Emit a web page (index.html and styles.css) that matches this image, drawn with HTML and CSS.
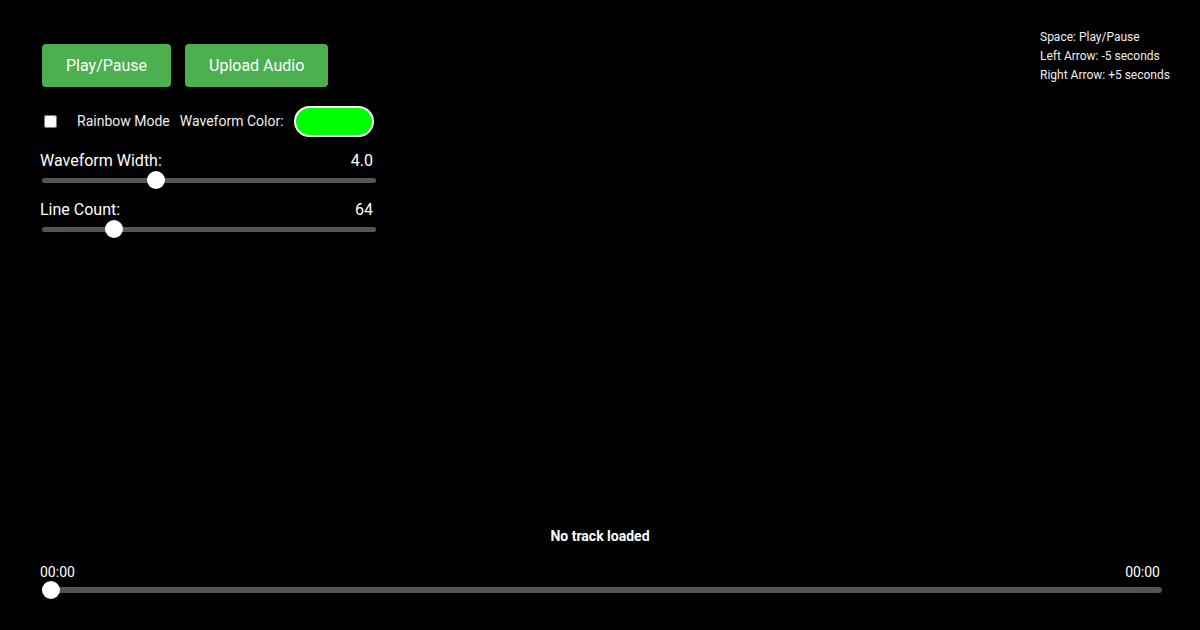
FILE: index.html
```html
<!DOCTYPE html>
<html>
<head>
<meta charset="utf-8">
<link rel="stylesheet" href="styles.css">
</head>
<body>
<div class="top">
  <div class="panel">
    <div class="buttons">
      <button class="btn">Play/Pause</button>
      <button class="btn">Upload Audio</button>
    </div>
    <div class="options">
      <input type="checkbox" class="check">
      <span class="opt-label rainbow">Rainbow Mode</span>
      <span class="opt-label">Waveform Color:</span>
      <span class="swatch"></span>
    </div>
    <div class="slider-group">
      <div class="slider-label"><span>Waveform Width:</span><span>4.0</span></div>
      <input type="range" class="range" min="1" max="10" step="0.1" value="4">
    </div>
    <div class="slider-group second">
      <div class="slider-label"><span>Line Count:</span><span>64</span></div>
      <input type="range" class="range" min="16" max="256" value="64">
    </div>
  </div>
  <div class="help">
    <div>Space: Play/Pause</div>
    <div>Left Arrow: -5 seconds</div>
    <div>Right Arrow: +5 seconds</div>
  </div>
</div>
<div class="bottom">
  <div class="track-title">No track loaded</div>
  <div class="times"><span>00:00</span><span>00:00</span></div>
  <input type="range" class="range progress" min="0" max="100" value="0">
</div>
</body>
</html>
```

FILE: styles.css
```css
* { box-sizing: border-box; }
html, body { margin: 0; padding: 0; }
body {
  width: 1200px;
  height: 630px;
  background: #000;
  color: #fff;
  font-family: Roboto, "Liberation Sans", sans-serif;
  display: flex;
  flex-direction: column;
  overflow: hidden;
}
.top {
  display: flex;
  justify-content: space-between;
  align-items: flex-start;
}
.panel {
  width: 338px;
  margin-left: 40px;
  padding-top: 44px;
}
.buttons {
  display: flex;
  gap: 14px;
  padding-left: 2px;
}
.btn {
  height: 43px;
  padding: 0 24px;
  background: #4caf50;
  color: #fff;
  border: none;
  border-radius: 4px;
  font-family: Roboto, "Liberation Sans", sans-serif;
  font-size: 16px;
}
.options {
  display: flex;
  align-items: center;
  height: 30px;
  margin-top: 19px;
}
.check {
  width: 13px;
  height: 13px;
  margin: 0 20px 0 4px;
}
.opt-label {
  font-size: 14px;
  color: #eee;
}
.rainbow { margin-right: 10px; }
.swatch {
  display: block;
  width: 80px;
  height: 31px;
  margin-left: 10px;
  background: #00ff00;
  border: 2px solid #fff;
  border-radius: 16px;
}
.slider-group { margin-top: 15px; }
.slider-group.second { margin-top: 11px; }
.slider-label {
  display: flex;
  justify-content: space-between;
  font-size: 16px;
  line-height: 19px;
  padding-right: 5px;
  margin-bottom: 1px;
}
.range {
  -webkit-appearance: none;
  appearance: none;
  display: block;
  width: calc(100% - 4px);
  height: 18px;
  margin: 0 2px;
  background: transparent;
}
.range::-webkit-slider-runnable-track {
  height: 5px;
  background: #555;
  border-radius: 3px;
}
.range::-webkit-slider-thumb {
  -webkit-appearance: none;
  width: 18px;
  height: 18px;
  margin-top: -6.5px;
  border-radius: 50%;
  background: #fff;
  border: none;
}
.help {
  padding: 28px 30px 0 0;
  width: 160px;
  font-size: 12px;
  line-height: 19px;
  color: #eee;
}
.bottom {
  margin-top: auto;
  padding: 0 40px 31px 40px;
}
.track-title {
  text-align: center;
  font-weight: bold;
  font-size: 14px;
  line-height: 17px;
}
.times {
  display: flex;
  justify-content: space-between;
  font-size: 14px;
  line-height: 17px;
  margin-top: 19px;
}
.progress {
  width: 1120px;
  margin: 0 0 0 2px;
}
.progress::-webkit-slider-runnable-track {
  height: 6px;
}
.progress::-webkit-slider-thumb {
  margin-top: -6px;
}
```
